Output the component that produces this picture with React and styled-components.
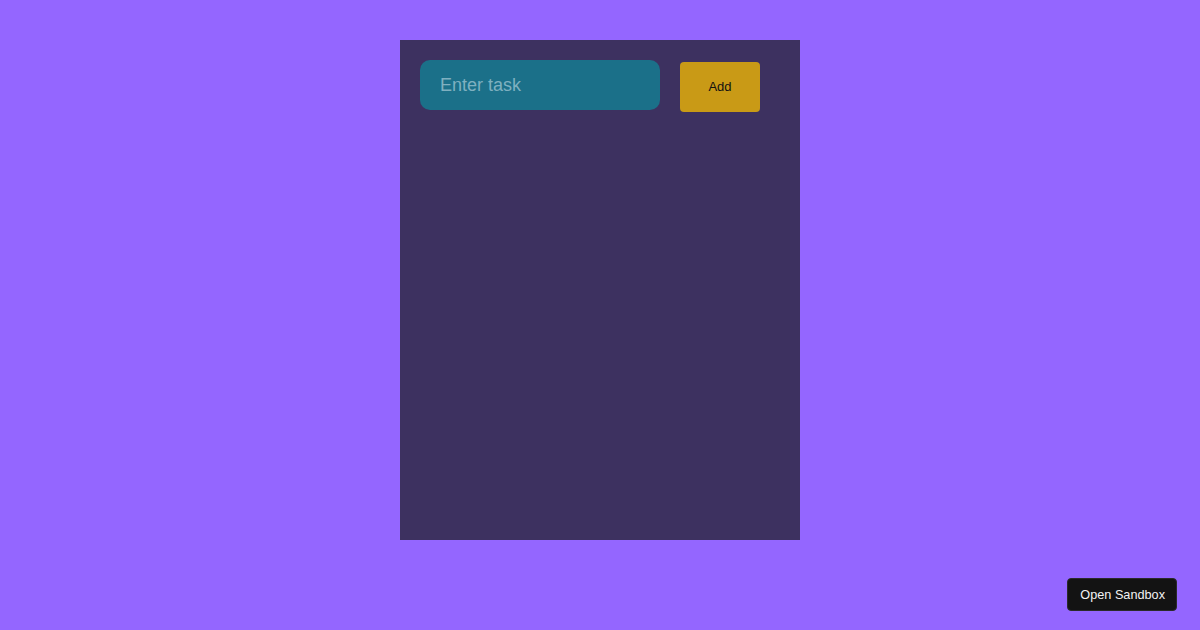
import React, { useState } from 'react';
import styled, { createGlobalStyle } from 'styled-components';

const GlobalStyle = createGlobalStyle`
  html, body {
    margin: 0;
    padding: 0;
    background: #9466ff;
    font-family: "Liberation Sans", Arial, sans-serif;
  }
`;

const Page = styled.div`
  display: flex;
  justify-content: center;
  padding-top: 40px;
  height: 630px;
  box-sizing: border-box;
`;

const Board = styled.div`
  width: 400px;
  height: 500px;
  background: #3d3160;
  padding: 20px;
  box-sizing: border-box;
`;

const Form = styled.form`
  display: flex;
  align-items: flex-start;
  gap: 20px;
`;

const TaskInput = styled.input`
  width: 240px;
  height: 50px;
  box-sizing: border-box;
  border: none;
  border-radius: 10px;
  background: #1b7089;
  color: #e6f2f5;
  padding: 0 20px;
  font-family: "Liberation Sans", Arial, sans-serif;
  font-size: 18px;
  outline: none;

  &::placeholder {
    color: #7fb0c0;
  }
`;

const AddButton = styled.button`
  width: 80px;
  height: 50px;
  margin-top: 2px;
  padding: 0 0 2px;
  border: none;
  border-radius: 4px;
  background: #c99a16;
  color: #111;
  font-family: "Liberation Sans", Arial, sans-serif;
  font-size: 13px;
  cursor: pointer;
`;

const SandboxButton = styled.button`
  position: fixed;
  right: 23px;
  bottom: 19px;
  height: 33px;
  padding: 0 11px 0 12px;
  background: #131313;
  color: #f2f2f2;
  border: 1px solid #2a2a2a;
  border-radius: 4px;
  font-family: "Liberation Sans", Arial, sans-serif;
  font-size: 12.7px;
`;

export default function App() {
  const [task, setTask] = useState('');

  return (
    <>
      <GlobalStyle />
      <Page>
        <Board>
          <Form onSubmit={e => e.preventDefault()}>
            <TaskInput
              placeholder="Enter task"
              value={task}
              onChange={e => setTask(e.target.value)}
            />
            <AddButton type="submit">Add</AddButton>
          </Form>
        </Board>
      </Page>
      <SandboxButton>Open Sandbox</SandboxButton>
    </>
  );
}
